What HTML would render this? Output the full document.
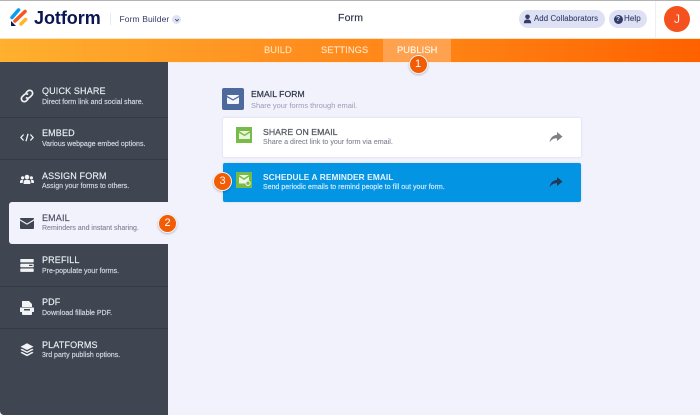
<!DOCTYPE html>
<html><head><meta charset="utf-8"><style>
html,body{margin:0;padding:0}
body{width:700px;height:415px;overflow:hidden;position:relative;background:#f1f2fc;font-family:"Liberation Sans",sans-serif}
#r{position:absolute;left:0;top:0;width:700px;height:415px;filter:blur(.35px)}
.a,.t,svg.a{position:absolute}
.t{white-space:nowrap;line-height:1}
.h{color:#eceef2;font-size:9px;letter-spacing:.15px;left:42px;-webkit-text-stroke:.15px #eceef2}
.s{color:#d5dae3;font-size:7px;left:42px;-webkit-text-stroke:.15px #d5dae3}
.d{position:absolute;left:0;width:168px;height:1px;background:#353b46}
.b{position:absolute;width:19px;height:19px;border-radius:50%;background:#f25c05;border:1px solid #f3f3f3;box-sizing:border-box;color:#fff;font-size:11px;line-height:17px;text-align:center;box-shadow:0 1px 2px rgba(0,0,0,.25)}
</style></head><body><div id="r">
<div class="a" style="left:0;top:0;width:700px;height:38px;background:#fff"></div>
<div class="a" style="left:0;top:0;width:700px;height:1px;background:#b4b4b6"></div>
<svg class="a" style="left:10px;top:8px" width="18" height="19" viewBox="0 0 18 19"><path d="M2 9.500 8.500 2" stroke="#0a9ef0" stroke-width="3.600" stroke-linecap="round"/><path d="M5.500 13.500 15.500 4" stroke="#f4581e" stroke-width="3.600" stroke-linecap="round" transform="translate(-.5 -.5)"/><path d="M11 16 15.500 11.500" stroke="#ffb629" stroke-width="3.600" stroke-linecap="round"/><path d="M1 13v4.500q0 .5.5.5H6z" fill="#0a1551"/></svg>
<div class="t" style="left:34px;top:9px;font-size:18px;font-weight:bold;color:#0a1551;letter-spacing:-.05px">Jotform</div>
<div class="a" style="left:110px;top:13px;width:1px;height:12px;background:#e8e9f0"></div>
<div class="t" style="left:119.500px;top:15px;font-size:8.500px;color:#343c6a;letter-spacing:.1px">Form Builder</div>
<div class="a" style="left:172px;top:15px;width:9px;height:9px;border-radius:50%;background:#dfe2f2"></div>
<svg class="a" style="left:172.500px;top:15.500px" width="8" height="8"><path d="M2.300 3.200 4 5l1.700-1.800" fill="none" stroke="#343c6a" stroke-width=".9"/></svg>
<div class="t" style="left:338px;top:13px;font-size:10.500px;color:#2b3245;letter-spacing:.15px;-webkit-text-stroke:.15px #2b3245">Form</div>
<div class="a" style="left:519px;top:10px;width:86px;height:18px;border-radius:9px;background:#dde1f3"></div>
<svg class="a" style="left:523px;top:14px" width="9" height="10" viewBox="0 0 9 10"><circle cx="4.500" cy="2.800" r="2.300" fill="#343c6a"/><path d="M.8 9.300c0-3 1.500-3.800 3.700-3.800s3.700.8 3.700 3.800z" fill="#343c6a"/></svg>
<div class="t" style="left:534px;top:15px;font-size:7.800px;color:#343c6a;letter-spacing:.1px;-webkit-text-stroke:.1px #343c6a">Add Collaborators</div>
<div class="a" style="left:609px;top:10px;width:38px;height:18px;border-radius:9px;background:#dde1f3"></div>
<div class="t a" style="left:613.500px;top:15px;width:9px;height:9px;border-radius:50%;background:#343c6a;color:#dde1f3;font-size:7px;line-height:9px;text-align:center;font-weight:bold">?</div>
<div class="t" style="left:624px;top:15px;font-size:8px;color:#343c6a;letter-spacing:.1px;-webkit-text-stroke:.1px #343c6a">Help</div>
<div class="a" style="left:655px;top:1px;width:1px;height:37px;background:#eef0f6"></div>
<div class="a" style="left:664px;top:6px;width:26px;height:26px;border-radius:50%;background:#f4511e;color:#fff0e6;font-size:12px;line-height:27px;text-align:center">J</div>

<div class="a" style="left:0;top:38px;width:700px;height:1px;background:#ffe2c0"></div>
<div class="a" style="left:0;top:39px;width:700px;height:23px;background:linear-gradient(90deg,#ffb02e 0%,#ff9020 40%,#ff8213 65%,#ff6100 100%)"></div>
<div class="a" style="left:383px;top:39px;width:68px;height:23px;background:#ffa24f"></div>
<div class="t" style="left:264px;top:45.500px;font-size:9.300px;color:#ffe0b5;letter-spacing:.1px;-webkit-text-stroke:.15px #ffe0b5">BUILD</div>
<div class="t" style="left:321px;top:45.500px;font-size:9.300px;color:#ffe4c8;letter-spacing:.1px;-webkit-text-stroke:.15px #ffe4c8">SETTINGS</div>
<div class="t" style="left:397px;top:45.500px;font-size:9.300px;color:#fff6ec;letter-spacing:.1px;-webkit-text-stroke:.15px #fff6ec">PUBLISH</div>
<div class="a" style="left:0;top:62px;width:700px;height:1px;background:#fbe9da"></div>

<div class="a" style="left:0;top:62px;width:168px;height:353px;background:#3f4652;border-bottom-left-radius:4px"></div>
<div class="d" style="top:117px"></div><div class="d" style="top:159px"></div><div class="d" style="top:286px"></div><div class="d" style="top:328px"></div>
<div class="a" style="left:8.500px;top:202px;width:160px;height:42px;background:#f1f2fc;border-radius:3px 0 0 3px"></div>

<svg class="a" style="left:19px;top:88px" width="16" height="16" viewBox="0 0 16 16" fill="none" stroke="#f2f3f5" stroke-width="1.700"><path d="M6.700 5.200 8.600 3.200a2.900 2.900 0 0 1 4.200 4.100l-2 2a2.900 2.900 0 0 1-3.900.2"/><path d="M9.300 10.800 7.400 12.800a2.900 2.900 0 0 1-4.200-4.100l2-2a2.900 2.900 0 0 1 3.900-.2"/></svg>
<svg class="a" style="left:20px;top:133px" width="14" height="9" viewBox="0 0 14 9" fill="none" stroke="#f2f3f5" stroke-width="1.300"><path d="M3.600 1.500.9 4.500l2.700 3M10.400 1.500l2.700 3-2.700 3M8 .8 6 8.200"/></svg>
<svg class="a" style="left:20px;top:174px" width="14" height="11" viewBox="0 0 14 11" fill="#f2f3f5"><circle cx="7" cy="3" r="2.300"/><circle cx="2.600" cy="3.800" r="1.600"/><circle cx="11.400" cy="3.800" r="1.600"/><path d="M3.600 10V8q0-2.200 3.400-2.200T10.400 8v2zM0 9V7.500q0-1.700 2.700-1.700l.5.100Q2.700 7 2.700 9zM14 9V7.500q0-1.700-2.700-1.700l-.5.100Q11.300 7 11.300 9z"/></svg>
<svg class="a" style="left:20px;top:218px" width="14" height="11" viewBox="0 0 14 11"><path d="M.8 0h12.400q.8 0 .8.800v.4L7 5.500 0 1.200V.8Q0 0 .8 0zM0 2.600l7 4.200 7-4.200V10q0 1-1 1H1q-1 0-1-1z" fill="#3f4652"/></svg>
<svg class="a" style="left:20px;top:259px" width="14" height="13" viewBox="0 0 14 13" fill="#f2f3f5"><rect x=".3" y="0" width="13.400" height="3.400" rx=".6"/><rect x=".3" y="4.800" width="13.400" height="3.400" rx=".6"/><rect x=".3" y="9.500" width="13.400" height="3.400" rx=".6"/><rect x="9" y="5.800" width="3.500" height="1.200" fill="#3f4652"/></svg>
<svg class="a" style="left:20px;top:301px" width="14" height="14" viewBox="0 0 14 14"><path d="M2 0h7l3 3v3H2zM2 11h10v2q0 1-1 1H3q-1 0-1-1zM.6 6.500h12.800q.6 0 .6.600v3.300q0 .6-.6.600H.6q-.6 0-.6-.6V7.100q0-.6.600-.6z" fill="#f2f3f5"/><rect x="4" y="8" width="6" height="1.500" fill="#3f4652"/></svg>
<svg class="a" style="left:20px;top:343px" width="14" height="14" viewBox="0 0 14 14"><path d="M7 .3 13.500 3.700 7 7 .5 3.700z" fill="#f2f3f5"/><path d="M1.800 5.800.5 6.700 7 10l6.500-3.300-1.300-.9L7 8.500z" fill="#f2f3f5"/><path d="M1.800 8.800.5 9.700 7 13.300l6.500-3.600-1.300-.9L7 11.500z" fill="#f2f3f5"/></svg>

<div class="t h" style="top:87px">QUICK SHARE</div><div class="t s" style="top:98.500px">Direct form link and social share.</div>
<div class="t h" style="top:129px">EMBED</div><div class="t s" style="top:140.500px">Various webpage embed options.</div>
<div class="t h" style="top:172px">ASSIGN FORM</div><div class="t s" style="top:183px">Assign your forms to others.</div>
<div class="t h" style="top:214px;color:#4a4f63;-webkit-text-stroke:.15px #4a4f63">EMAIL</div><div class="t s" style="top:225px;color:#7d8196;-webkit-text-stroke:.1px #7d8196">Reminders and instant sharing.</div>
<div class="t h" style="top:256px">PREFILL</div><div class="t s" style="top:267.500px">Pre-populate your forms.</div>
<div class="t h" style="top:298px">PDF</div><div class="t s" style="top:310px">Download fillable PDF.</div>
<div class="t h" style="top:341px">PLATFORMS</div><div class="t s" style="top:352px">3rd party publish options.</div>

<div class="a" style="left:222px;top:88px;width:22px;height:22px;border-radius:2px;background:#4e6a9c"></div>
<svg class="a" style="left:227px;top:95px" width="12" height="9" viewBox="0 0 12 9"><path d="M.8 0h10.400q.8 0 .8.800L6 4.300 0 .8Q0 0 .8 0zM0 2.200l6 3.400 6-3.400V8q0 1-1 1H1q-1 0-1-1z" fill="#f4f6fb"/></svg>
<div class="t" style="left:251px;top:90px;font-size:8.600px;color:#2c3345;letter-spacing:.05px;-webkit-text-stroke:.2px #2c3345">EMAIL FORM</div>
<div class="t" style="left:251px;top:101.500px;font-size:7.450px;color:#9a9db8">Share your forms through email.</div>

<div class="a" style="left:223px;top:118px;width:358px;height:39px;background:#fff;border-radius:2px;box-shadow:0 0 2px rgba(80,80,120,.18)"></div>
<div class="a" style="left:236px;top:127px;width:16px;height:16px;background:#78bb47"></div>
<svg class="a" style="left:239px;top:131px" width="11" height="8" viewBox="0 0 11 8"><path d="M0 0h11L5.500 3.500zM0 1.800l5.500 3.300L11 1.800V8H0z" fill="#e9f5df"/></svg>
<div class="t" style="left:263px;top:127.500px;font-size:8.700px;color:#55585f;letter-spacing:.05px;-webkit-text-stroke:.25px #55585f">SHARE ON EMAIL</div>
<div class="t" style="left:263px;top:138.500px;font-size:7.100px;color:#808490;letter-spacing:.03px;-webkit-text-stroke:.1px #808490">Share a direct link to your form via email.</div>
<svg class="a" style="left:549px;top:132px" width="14" height="11" viewBox="0 0 14 11"><path d="M8 0l5.500 4.600L8 9V6.300C5 6.200 2.500 7.300.6 10.500 1 6.500 3.500 3.200 8 2.900z" fill="#7d7f83"/></svg>

<div class="a" style="left:223px;top:163px;width:358px;height:39px;background:#0494e4;border-radius:2px;box-shadow:0 0 2px rgba(80,80,120,.2)"></div>
<div class="a" style="left:236px;top:172px;width:16px;height:16px;background:#78bb47"></div>
<svg class="a" style="left:238px;top:175px" width="13" height="11" viewBox="0 0 13 11"><path d="M1 0h10L6 3.300zM1 1.800l5 3.200 5-3.200V5.500a3 3 0 0 0-3.500 3H1z" fill="#eef7e6"/><circle cx="10" cy="8.300" r="2.200" fill="none" stroke="#eef7e6" stroke-width="1"/></svg>
<div class="t" style="left:263px;top:172.500px;font-size:8.300px;color:#e6f5ff;letter-spacing:.1px;font-weight:bold">SCHEDULE A REMINDER EMAIL</div>
<div class="t" style="left:263px;top:183.500px;font-size:7px;color:#d5edfb;letter-spacing:.02px;-webkit-text-stroke:.15px #d5edfb">Send periodic emails to remind people to fill out your form.</div>
<svg class="a" style="left:549px;top:177px" width="14" height="11" viewBox="0 0 14 11"><path d="M8 0l5.500 4.600L8 9V6.300C5 6.200 2.500 7.300.6 10.500 1 6.500 3.500 3.200 8 2.900z" fill="#213a58"/></svg>

<div class="b" style="left:408.500px;top:55px">1</div>
<div class="b" style="left:158px;top:214px">2</div>
<div class="b" style="left:213px;top:172px">3</div>
</div></body></html>
